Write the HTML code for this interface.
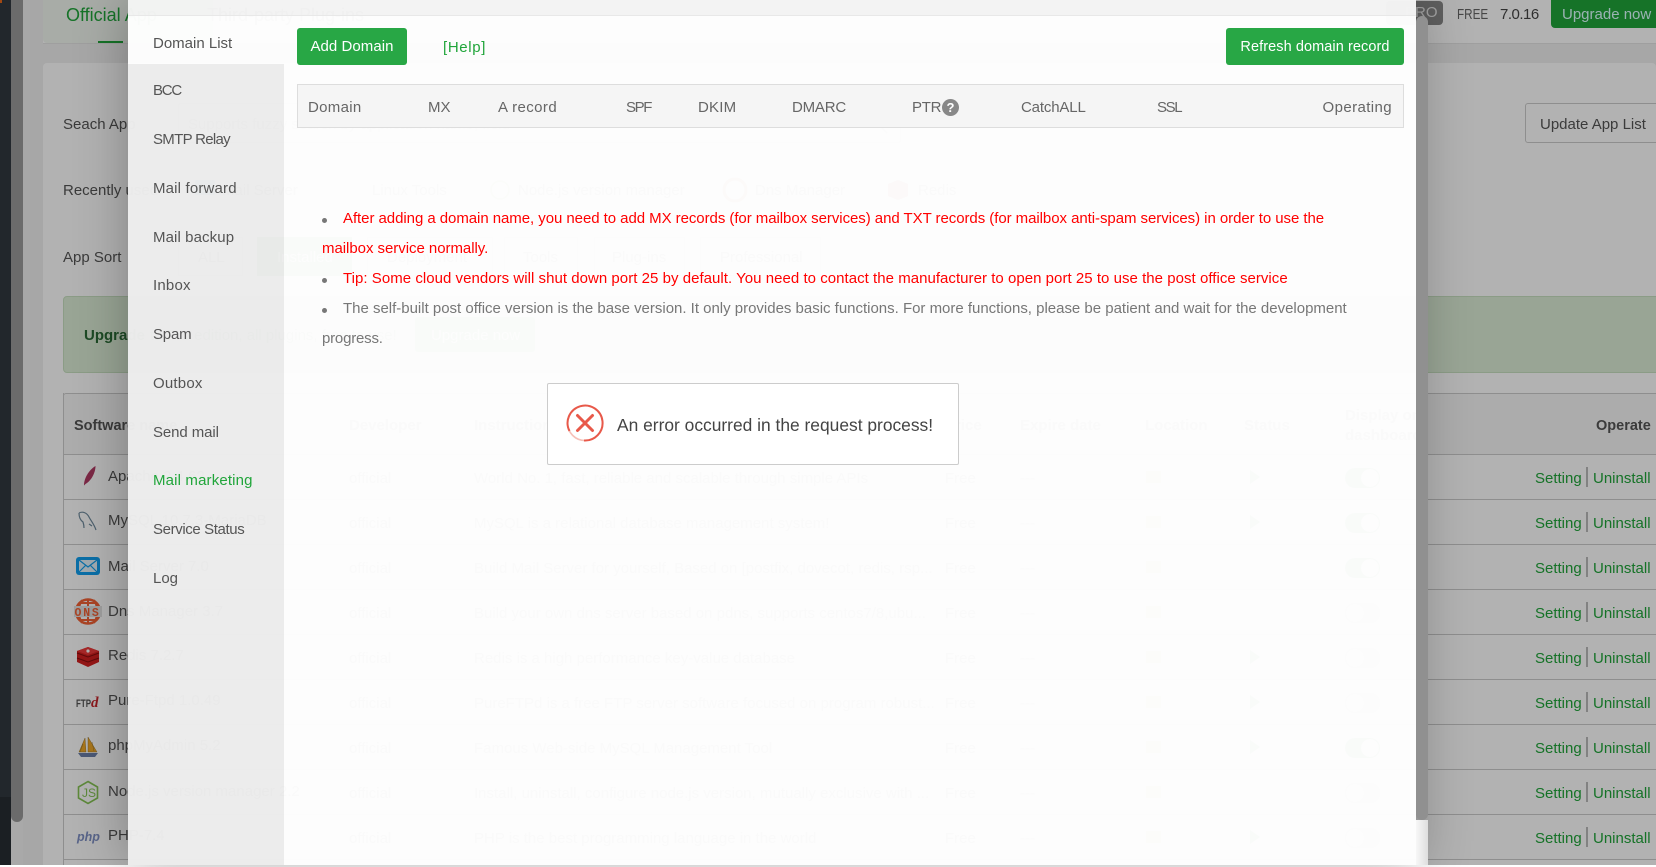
<!DOCTYPE html>
<html><head><meta charset="utf-8"><style>
html,body{margin:0;padding:0;background:#fff}
#w{position:relative;width:1656px;height:867px;overflow:hidden;background:#fff;font:15px/20px "Liberation Sans",sans-serif;color:#555}
#p,#ov,#c{position:absolute;left:0;top:0;width:1656px;height:865px;overflow:hidden}
#p{background:#f0f0f0}
#ov{background:rgba(0,0,0,.3)}
.a,.t{position:absolute}
.t{white-space:nowrap;margin-top:2px}
.l{position:absolute;left:63px;right:0;height:1px;background:#ccc}
.g{color:#20a53a}
.b{font-weight:bold}
.tg{position:absolute;left:1345px;width:35px;height:20px;border-radius:10px;background:#20a53a}
.tg:after{content:"";position:absolute;right:1px;top:1px;width:18px;height:18px;border-radius:50%;background:#fff}
.tg.o{background:#ddd}.tg.o:after{right:auto;left:1px}
.sep{position:absolute;left:1586px;width:2px;height:20px;background:#bbb}
#m{position:absolute;left:128px;top:0;width:1288px;height:865px;background:rgba(254,254,254,.98);box-shadow:1px 1px 50px rgba(0,0,0,.3)}
.gb{position:absolute;background:#28a745;border-radius:3px;color:#fff;text-align:center}
.th{top:96px;color:#666}
.sb{left:153px;color:#555}
.n{color:#f00}
</style></head><body><div id="w">
<div id="p">
<div class="a" style="left:0;top:0;width:11px;height:865px;background:#31393f"></div>
<div class="a" style="left:0;top:797px;width:11px;height:68px;background:#272d33"></div>
<div class="a" style="left:0;top:0;width:2px;height:3px;background:#e8681a"></div>
<div class="a" style="left:11px;top:0;width:12px;height:865px;background:#f2f2f2"></div>
<div class="a" style="left:11px;top:0;width:12px;height:822px;background:#9a9a9a;border-radius:0 0 6px 6px"></div>
<div class="a" style="left:43px;top:0;right:0;height:43px;background:#fff;border-bottom:1px solid #e4e4e4"></div>
<div class="a" style="left:43px;top:0;width:170px;height:43px;background:#f1f7f0;border-radius:0 0 4px 4px"></div>
<div class="a" style="left:98px;top:41px;width:25px;height:2px;background:#20a53a"></div>
<div class="t g" style="left:66px;top:3px;font-size:18px">Official App</div>
<div class="t" style="left:207px;top:3px;font-size:18px">Third-party Plug-ins</div>
<div class="a" style="left:1386px;top:1px;width:57px;height:24px;background:#888;border-radius:4px"></div>
<div class="t" style="left:1405px;top:1px;color:#e8e8e8;font-size:15px">PRO</div>
<div class="t" style="left:1457px;top:3px;color:#666;transform:scaleX(.78);transform-origin:0 0">FREE</div>
<div class="t" style="left:1500px;top:3px;color:#444;letter-spacing:-.5px">7.0.16</div>
<div class="a" style="left:1551px;top:0;right:0;height:28px;background:#20a53a;border-radius:0 0 0 4px"></div>
<div class="t" style="left:1562px;top:3px;color:#dff">Upgrade now</div>
<div class="a" style="left:43px;top:63px;right:0;height:802px;background:#fff;border-radius:4px 4px 0 0"></div>
<div class="t" style="left:63px;top:113px">Seach App</div>
<div class="a" style="left:178px;top:103px;width:723px;height:40px;border:1px solid #ddd;box-sizing:border-box;border-radius:3px"></div>
<div class="t" style="left:188px;top:113px;color:#999">Supports fuzzy search by application name, field</div>
<div class="a" style="left:1525px;top:103px;width:140px;height:40px;border:1px solid #ccc;box-sizing:border-box;border-radius:3px"></div>
<div class="t" style="left:1540px;top:113px">Update App List</div>
<div class="t" style="left:63px;top:179px">Recently used</div>
<div class="t" style="left:222px;top:179px">Mail Server</div>
<div class="t" style="left:372px;top:179px">Linux Tools</div>
<div class="t" style="left:518px;top:179px">Node.js version manager</div>
<div class="t" style="left:755px;top:179px">Dns Manager</div>
<div class="t" style="left:918px;top:179px">Redis</div>
<div class="t" style="left:63px;top:246px">App Sort</div>
<div class="a" style="left:178px;top:237px;width:65px;height:39px;border:1px solid #e4e4e4;box-sizing:border-box"></div>
<div class="t" style="left:198px;top:246px">ALL</div>
<div class="a" style="left:257px;top:237px;width:95px;height:39px;background:#20a53a"></div>
<div class="t" style="left:277px;top:246px;color:#fff">Installed</div>
<div class="a" style="left:367px;top:237px;width:126px;height:39px;border:1px solid #e4e4e4;box-sizing:border-box"></div>
<div class="t" style="left:387px;top:246px">Deployment</div>
<div class="a" style="left:504px;top:237px;width:74px;height:39px;border:1px solid #e4e4e4;box-sizing:border-box"></div>
<div class="t" style="left:523px;top:246px">Tools</div>
<div class="a" style="left:594px;top:237px;width:91px;height:39px;border:1px solid #e4e4e4;box-sizing:border-box"></div>
<div class="t" style="left:612px;top:246px">Plug-ins</div>
<div class="a" style="left:700px;top:237px;width:121px;height:39px;border:1px solid #e4e4e4;box-sizing:border-box"></div>
<div class="t" style="left:720px;top:246px">Professional</div>
<div class="a" style="left:63px;top:296px;width:1700px;height:77px;background:#dcedd6;border:1px solid #c8e0c0;box-sizing:border-box;border-radius:4px"></div>
<div class="t b" style="left:84px;top:324px;color:#2a6b36">Upgrade</div>
<div class="t" style="left:150px;top:324px;color:#2a6b36">to Pro edition, all plugins, free to use!</div>
<div class="a" style="left:415px;top:317px;width:120px;height:35px;background:#20a53a;border-radius:3px"></div>
<div class="t" style="left:431px;top:324px;color:#fff">Upgrade now</div>
<div class="a" style="left:63px;top:393px;right:-8px;height:61px;background:#f6f6f6;border:1px solid #ccc;border-bottom:0;box-sizing:border-box;border-radius:3px 0 0 0"></div>
<div class="a" style="left:63px;top:393px;width:1px;height:472px;background:#ccc"></div>
<div class="t b" style="left:74px;top:414px;font-size:14.5px">Software name</div>
<div class="t b" style="left:349px;top:414px">Developer</div>
<div class="t b" style="left:474px;top:414px">Instructions</div>
<div class="t b" style="left:945px;top:414px">Price</div>
<div class="t b" style="left:1020px;top:414px">Expire date</div>
<div class="t b" style="left:1145px;top:414px">Location</div>
<div class="t b" style="left:1244px;top:414px">Status</div>
<div class="t b" style="left:1345px;top:404px">Display on<br>dashboard</div>
<div class="t b" style="left:1596px;top:414px;font-size:14.5px">Operate</div>
<div class="l" style="top:454px"></div><div class="l" style="top:499px"></div><div class="l" style="top:544px"></div><div class="l" style="top:589px"></div><div class="l" style="top:634px"></div><div class="l" style="top:679px"></div><div class="l" style="top:724px"></div><div class="l" style="top:769px"></div><div class="l" style="top:814px"></div><div class="l" style="top:859px"></div>

<div class="t" style="left:108px;top:465px">Apache 2.4.62</div><div class="t" style="left:349px;top:467px">official</div><div class="t" style="left:474px;top:467px">World No. 1, fast, reliable and scalable through simple APIs</div><div class="t" style="left:945px;top:467px">Free</div><div class="t" style="left:1020px;top:467px">---</div><div class="t g" style="left:1535px;top:467px">Setting</div><div class="sep" style="top:467px"></div><div class="t g" style="left:1593px;top:467px">Uninstall</div><div class="tg" style="top:468px"></div>
<div class="t" style="left:108px;top:509px">MySQL 10.7.3-MariaDB</div><div class="t" style="left:349px;top:512px">official</div><div class="t" style="left:474px;top:512px">MySQL is a relational database management system!</div><div class="t" style="left:945px;top:512px">Free</div><div class="t" style="left:1020px;top:512px">---</div><div class="t g" style="left:1535px;top:512px">Setting</div><div class="sep" style="top:512px"></div><div class="t g" style="left:1593px;top:512px">Uninstall</div><div class="tg" style="top:513px"></div>
<div class="t" style="left:108px;top:555px">Mail Server 7.0</div><div class="t" style="left:349px;top:557px">official</div><div class="t" style="left:474px;top:557px">Build Mail Server for yourself, Based on [postfix, dovecot, redis, rsp...</div><div class="t" style="left:945px;top:557px">Free</div><div class="t" style="left:1020px;top:557px">---</div><div class="t g" style="left:1535px;top:557px">Setting</div><div class="sep" style="top:557px"></div><div class="t g" style="left:1593px;top:557px">Uninstall</div><div class="tg" style="top:558px"></div>
<div class="t" style="left:108px;top:600px">Dns Manager 3.7</div><div class="t" style="left:349px;top:602px">official</div><div class="t" style="left:474px;top:602px">Build your own dns server based on pdns, supports centos7/8,ubu...</div><div class="t" style="left:945px;top:602px">Free</div><div class="t" style="left:1020px;top:602px">---</div><div class="t g" style="left:1535px;top:602px">Setting</div><div class="sep" style="top:602px"></div><div class="t g" style="left:1593px;top:602px">Uninstall</div><div class="tg o" style="top:603px"></div>
<div class="t" style="left:108px;top:644px">Redis 7.2.7</div><div class="t" style="left:349px;top:647px">official</div><div class="t" style="left:474px;top:647px">Redis is a high performance key-value database</div><div class="t" style="left:945px;top:647px">Free</div><div class="t" style="left:1020px;top:647px">---</div><div class="t g" style="left:1535px;top:647px">Setting</div><div class="sep" style="top:647px"></div><div class="t g" style="left:1593px;top:647px">Uninstall</div><div class="tg o" style="top:648px"></div>
<div class="t" style="left:108px;top:689px">Pure-Ftpd 1.0.49</div><div class="t" style="left:349px;top:692px">official</div><div class="t" style="left:474px;top:692px">PureFTPd is a free FTP server software focused on program robust...</div><div class="t" style="left:945px;top:692px">Free</div><div class="t" style="left:1020px;top:692px">---</div><div class="t g" style="left:1535px;top:692px">Setting</div><div class="sep" style="top:692px"></div><div class="t g" style="left:1593px;top:692px">Uninstall</div><div class="tg o" style="top:693px"></div>
<div class="t" style="left:108px;top:734px">phpMyAdmin 5.2</div><div class="t" style="left:349px;top:737px">official</div><div class="t" style="left:474px;top:737px">Famous Web-side MySQL Management Tool</div><div class="t" style="left:945px;top:737px">Free</div><div class="t" style="left:1020px;top:737px">---</div><div class="t g" style="left:1535px;top:737px">Setting</div><div class="sep" style="top:737px"></div><div class="t g" style="left:1593px;top:737px">Uninstall</div><div class="tg" style="top:738px"></div>
<div class="t" style="left:108px;top:780px">Node.js version manager 2.2</div><div class="t" style="left:349px;top:782px">official</div><div class="t" style="left:474px;top:782px">Install, uninstall, configure node.js version, mutually exclusive with ...</div><div class="t" style="left:945px;top:782px">Free</div><div class="t" style="left:1020px;top:782px">---</div><div class="t g" style="left:1535px;top:782px">Setting</div><div class="sep" style="top:782px"></div><div class="t g" style="left:1593px;top:782px">Uninstall</div><div class="tg o" style="top:783px"></div>
<div class="t" style="left:108px;top:824px">PHP-7.4</div><div class="t" style="left:349px;top:827px">official</div><div class="t" style="left:474px;top:827px">PHP is the best programming language in the world</div><div class="t" style="left:945px;top:827px">Free</div><div class="t" style="left:1020px;top:827px">---</div><div class="t g" style="left:1535px;top:827px">Setting</div><div class="sep" style="top:827px"></div><div class="t g" style="left:1593px;top:827px">Uninstall</div><div class="tg o" style="top:828px"></div>

<svg class="a" style="left:0;top:0" width="1656" height="865" viewBox="0 0 1656 865">
<path d="M84 485.500C84 478 89 470 95.500 466C95.500 473 91 481 85.500 484Z" fill="#b03a64"/>
<path d="M79 513C83 511 87 513 89 517C91 521 94 524 96 530M79 513C79 517 80 520 83 522C84 525 84 527 84 528M89 524L92 526" fill="none" stroke="#6f8a9c" stroke-width="1.2"/>
<rect x="76" y="557" width="24" height="18" rx="3" fill="#10a0f0"/><rect x="79" y="560" width="18" height="12" fill="#e6f4fc"/><path d="M79 560L88 567L97 560M79 572L86 565M97 572L90 565" fill="none" stroke="#10a0f0" stroke-width="1.2"/>
<circle cx="88" cy="611.500" r="12" fill="none" stroke="#f46236" stroke-width="2.600"/>
<path d="M88 599V624M80 603H96M80 620H96M82 600C78 606 78 617 82 623M94 600C98 606 98 617 94 623" fill="none" stroke="#f46236" stroke-width="2"/>
<rect x="74" y="606" width="28" height="11" fill="#e2e2e2"/>
<text x="74.500" y="616" font-family="Liberation Mono,monospace" font-weight="bold" font-size="11.500" letter-spacing="1.800" fill="#f46236">ONS</text>
<path d="M88 647L99 651V662L88 667L77 662V651Z" fill="#d42020"/><path d="M77 653L88 657L99 653M77 658L88 662L99 658" fill="none" stroke="#8a0f0f" stroke-width="1"/><path d="M88 647L99 651L88 655L77 651Z" fill="#ee3a3a"/><circle cx="88" cy="651" r="1.600" fill="#fff"/>
<text x="76" y="707" font-family="Liberation Sans,sans-serif" font-weight="bold" font-size="11" fill="#555" textLength="15" lengthAdjust="spacingAndGlyphs">FTP</text>
<text x="91" y="707" font-family="Liberation Serif,serif" font-style="italic" font-weight="bold" font-size="15" fill="#c8242a">d</text>
<path d="M85 738L79 752H86ZM88 737L97 752H88ZM83 744L80 752M92 742L94 751" fill="#f0a828" stroke="#8a6a20" stroke-width=".4"/><path d="M78 753H98L95 757H81Z" fill="#6a7fa8"/>
<path d="M88 781.500L97.500 787V798L88 803.500L78.500 798V787Z" fill="none" stroke="#86c454" stroke-width="1.600"/>
<text x="82" y="797" font-family="Liberation Sans,sans-serif" font-size="12" fill="#86c454">JS</text>
<text x="77" y="841" font-family="Liberation Sans,sans-serif" font-weight="bold" font-style="italic" font-size="12.500" fill="#7e90c4">php</text>
<rect x="195" y="180" width="20" height="15" rx="2" fill="#10a0f0"/>
<circle cx="500" cy="190" r="9" fill="none" stroke="#86c454" stroke-width="1.500"/>
<circle cx="735" cy="190" r="11" fill="none" stroke="#f46236" stroke-width="3"/>
<path d="M898 180L908 184V196L898 200L888 196V184Z" fill="#d42020"/>
<path d="M873 108a9 9 0 1 1-.1 0M880 126l7 7" fill="none" stroke="#888" stroke-width="1.500"/>
<g fill="#e8c840"><rect x="1146" y="471" width="15" height="12"/><rect x="1146" y="516" width="15" height="12"/><rect x="1146" y="561" width="15" height="12"/><rect x="1146" y="606" width="15" height="12"/><rect x="1146" y="651" width="15" height="12"/><rect x="1146" y="696" width="15" height="12"/><rect x="1146" y="741" width="15" height="12"/><rect x="1146" y="786" width="15" height="12"/><rect x="1146" y="831" width="15" height="12"/></g>
<g fill="#20a53a"><path d="M1250 470L1260 477L1250 484ZM1250 515L1260 522L1250 529ZM1250 650L1260 657L1250 664ZM1250 695L1260 702L1250 709ZM1250 740L1260 747L1250 754ZM1250 830L1260 837L1250 844Z"/></g>
</svg>
</div>
<div id="ov"></div>
<div id="m"></div>
<div id="c">
<div class="a" style="left:128px;top:0;width:1288px;height:15px;background:rgba(0,0,0,.04);border-bottom:1px solid #e8e8e8"></div>
<div class="a" style="left:128px;top:64px;width:156px;height:801px;background:rgba(0,0,0,.065)"></div>
<div class="t sb" style="top:32px">Domain List</div>
<div class="t sb" style="top:79px;letter-spacing:-1.200px">BCC</div>
<div class="t sb" style="top:128px;letter-spacing:-.7px">SMTP Relay</div>
<div class="t sb" style="top:177px;letter-spacing:.17px">Mail forward</div>
<div class="t sb" style="top:226px;letter-spacing:.1px">Mail backup</div>
<div class="t sb" style="top:274px;letter-spacing:.2px">Inbox</div>
<div class="t sb" style="top:323px;letter-spacing:-.2px">Spam</div>
<div class="t sb" style="top:372px;letter-spacing:.2px">Outbox</div>
<div class="t sb" style="top:421px;letter-spacing:-.1px">Send mail</div>
<div class="t sb" style="top:469px;color:#20a53a;letter-spacing:.15px">Mail marketing</div>
<div class="t sb" style="top:518px;letter-spacing:-.38px">Service Status</div>
<div class="t sb" style="top:567px">Log</div>
<div class="gb" style="left:297px;top:28px;width:110px;height:37px;line-height:38px;letter-spacing:.05px">Add Domain</div>
<div class="t g" style="left:443px;top:36px;letter-spacing:.65px">[Help]</div>
<div class="gb" style="left:1226px;top:28px;width:178px;height:37px;line-height:38px;font-size:14.500px;letter-spacing:.08px">Refresh domain record</div>
<div class="a" style="left:297px;top:84px;width:1107px;height:44px;background:#f5f5f5;border:1px solid #ddd;box-sizing:border-box"></div>
<div class="t th" style="left:308px;letter-spacing:.3px">Domain</div>
<div class="t th" style="left:428px">MX</div>
<div class="t th" style="left:498px;letter-spacing:.4px">A record</div>
<div class="t th" style="left:626px;letter-spacing:-1.400px">SPF</div>
<div class="t th" style="left:698px;letter-spacing:.2px">DKIM</div>
<div class="t th" style="left:792px;letter-spacing:-.2px">DMARC</div>
<div class="t th" style="left:912px;letter-spacing:-.3px">PTR</div>
<div class="a" style="left:942px;top:99px;width:17px;height:17px;border-radius:50%;background:#888;color:#fff;font-size:13px;font-weight:bold;line-height:17px;text-align:center">?</div>
<div class="t th" style="left:1021px;letter-spacing:-.15px">CatchALL</div>
<div class="t th" style="left:1157px;letter-spacing:-1.400px">SSL</div>
<div class="t th" style="right:264px;letter-spacing:.4px">Operating</div>
<div class="a" style="left:322px;top:218px;width:5px;height:5px;border-radius:50%;background:#777"></div>
<div class="t n" style="left:343px;top:207px;letter-spacing:-.055px">After adding a domain name, you need to add MX records (for mailbox services) and TXT records (for mailbox anti-spam services) in order to use the</div>
<div class="t n" style="left:322px;top:237px;letter-spacing:-.04px">mailbox service normally.</div>
<div class="a" style="left:322px;top:278px;width:5px;height:5px;border-radius:50%;background:#777"></div>
<div class="t n" style="left:343px;top:267px;letter-spacing:.035px">Tip: Some cloud vendors will shut down port 25 by default. You need to contact the manufacturer to open port 25 to use the post office service</div>
<div class="a" style="left:322px;top:308px;width:5px;height:5px;border-radius:50%;background:#777"></div>
<div class="t" style="left:343px;top:297px;color:#777;letter-spacing:-.01px">The self-built post office version is the base version. It only provides basic functions. For more functions, please be patient and wait for the development</div>
<div class="t" style="left:322px;top:327px;color:#777;letter-spacing:-.2px">progress.</div>
<div class="a" style="left:547px;top:383px;width:412px;height:82px;background:#fff;border:1px solid #ccc;box-sizing:border-box;border-radius:2px"></div>
<div class="t" style="left:617px;top:413px;font-size:17.400px;color:#444">An error occurred in the request process!</div>
<svg class="a" style="left:565px;top:403px" width="40" height="40" viewBox="0 0 40 40"><circle cx="20" cy="20" r="17.500" fill="none" stroke="#f6c0b8" stroke-width="1.600"/><path d="M4.500 28A17.500 17.500 0 1 1 19 37.500" fill="none" stroke="#e8594a" stroke-width="2"/><path d="M12.500 12.500L27.500 27.500M27.500 12.500L12.500 27.500" stroke="#e8594a" stroke-width="3" stroke-linecap="round"/></svg>
<div class="a" style="left:1416px;top:820px;width:12px;height:45px;background:linear-gradient(90deg,#f7f7f7,#dedede)"></div>
<div class="a" style="left:1416px;top:16px;width:12px;height:804px;background:#909090;border-radius:6px"></div>
</div>
</div></body></html>
